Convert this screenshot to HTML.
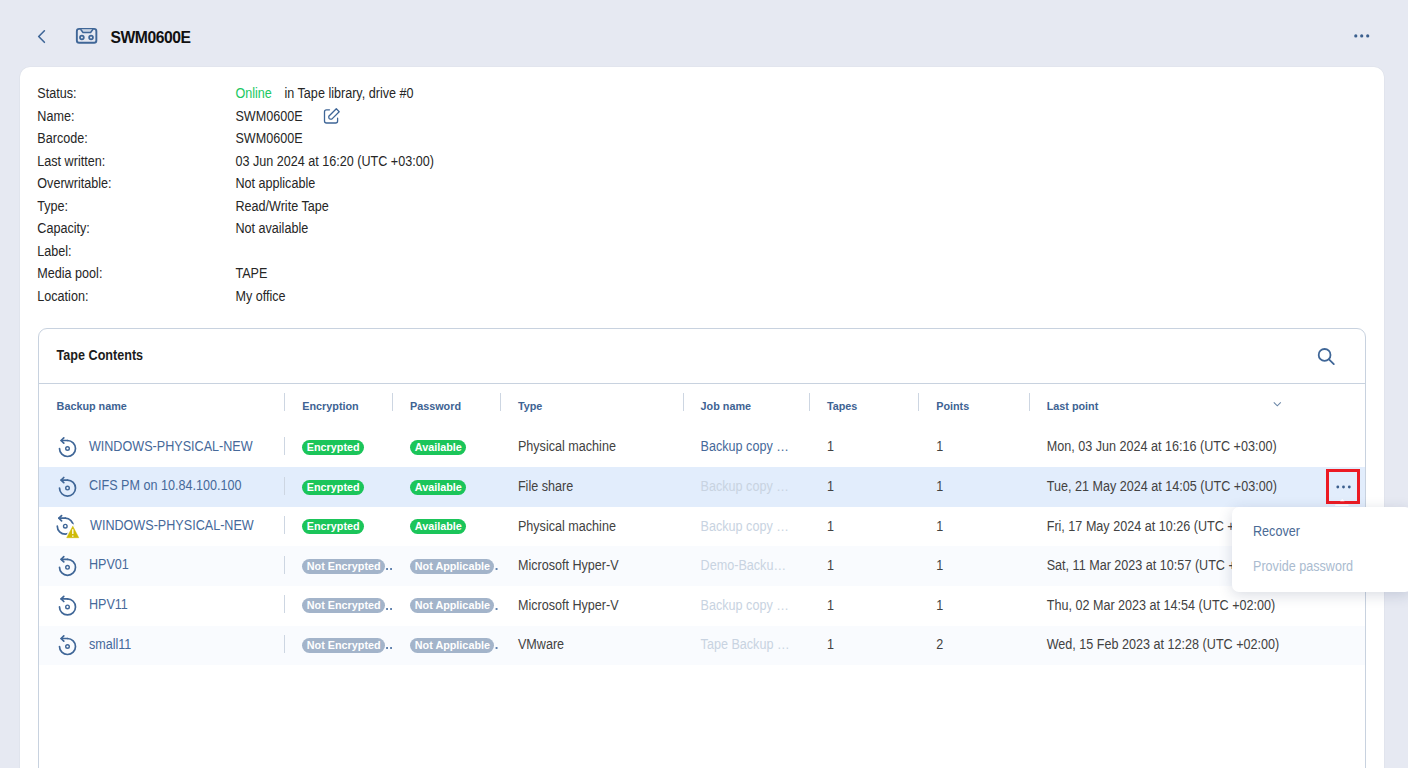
<!DOCTYPE html>
<html><head><meta charset="utf-8">
<style>
*{box-sizing:border-box;margin:0;padding:0}
html,body{width:1408px;height:768px;overflow:hidden;background:#e6e9f2;font-family:"Liberation Sans",sans-serif;color:#262626}
.a{position:absolute;white-space:nowrap;line-height:1}
.f{font-size:12.6px;transform:translateY(0.85px) scaleY(1.1);transform-origin:0 10.67px}
#card{position:absolute;left:20px;top:67px;width:1364px;height:760px;background:#fff;border-radius:10px;box-shadow:0 0 0 0.6px #dde1e9}
#panel{position:absolute;left:38px;top:328px;width:1328px;height:520px;border:1px solid #c8d2df;border-radius:9px;background:#fff}
.lbl{left:37.3px}
.val{left:235.4px}
.th{font-size:10.8px;font-weight:bold;color:#3e6393}
.sep{position:absolute;width:1px;height:18px;background:#cdd6e2}
.row{position:absolute;left:39px;width:1326px;height:39.6px}
.nm{color:#46699a}
.dk{color:#424242}
.badge{position:absolute;height:15px;border-radius:8px;color:#fff;font-weight:bold;font-size:10.8px;line-height:15px;padding-left:4.8px;overflow:hidden;white-space:nowrap}
.g{background:#1bc55a}
.gr{background:#a3b4ca}
.dis{color:#c8d3e1}
</style></head><body>
<svg class="a" style="left:0;top:0" width="300" height="60">
  <polyline points="44.4,30.8 38.7,36.5 44.4,42.3" fill="none" stroke="#3f6697" stroke-width="1.6" stroke-linecap="round" stroke-linejoin="round"/>
  <rect x="76.85" y="28.85" width="19.5" height="13.85" rx="2.3" fill="none" stroke="#3f6697" stroke-width="1.9"/>
  <path d="M80.6 29.3 L83 32.5 H90.6 L93 29.3" fill="#cbd5e4" stroke="#3f6697" stroke-width="1.5" stroke-linejoin="round"/>
  <circle cx="81.9" cy="37.45" r="1.9" fill="none" stroke="#3f6697" stroke-width="1.75"/>
  <circle cx="91.05" cy="37.45" r="1.9" fill="none" stroke="#3f6697" stroke-width="1.75"/>
</svg>
<div class="a" style="left:110.5px;top:29.5px;font-size:15.7px;font-weight:bold;color:#111;letter-spacing:-0.45px">SWM0600E</div>
<svg class="a" style="left:1340px;top:26px" width="40" height="20">
  <circle cx="15.8" cy="9.9" r="1.6" fill="#3b5f8e"/><circle cx="21.7" cy="9.9" r="1.6" fill="#3b5f8e"/><circle cx="27.7" cy="9.9" r="1.6" fill="#3b5f8e"/>
</svg>
<div id="card"></div>
<div class="a f lbl" style="top:87.20px">Status:</div>
<div class="a f lbl" style="top:109.70px">Name:</div>
<div class="a f val" style="top:109.70px">SWM0600E</div>
<div class="a f lbl" style="top:132.20px">Barcode:</div>
<div class="a f val" style="top:132.20px">SWM0600E</div>
<div class="a f lbl" style="top:154.70px">Last written:</div>
<div class="a f val" style="top:154.70px">03 Jun 2024 at 16:20 (UTC +03:00)</div>
<div class="a f lbl" style="top:177.20px">Overwritable:</div>
<div class="a f val" style="top:177.20px">Not applicable</div>
<div class="a f lbl" style="top:199.70px">Type:</div>
<div class="a f val" style="top:199.70px">Read/Write Tape</div>
<div class="a f lbl" style="top:222.20px">Capacity:</div>
<div class="a f val" style="top:222.20px">Not available</div>
<div class="a f lbl" style="top:244.70px">Label:</div>
<div class="a f lbl" style="top:267.20px">Media pool:</div>
<div class="a f val" style="top:267.20px">TAPE</div>
<div class="a f lbl" style="top:289.70px">Location:</div>
<div class="a f val" style="top:289.70px">My office</div>
<div class="a f val" style="top:87.2px;color:#20c862">Online</div>
<div class="a f" style="left:284.5px;top:87.2px">in Tape library, drive #0</div>
<svg class="a" style="left:318px;top:102px" width="30" height="30" viewBox="318 102 30 30">
  <path d="M329.5 109.8 H326.5 A2 2 0 0 0 324.5 111.8 V121 A2 2 0 0 0 326.5 123 H335.6 A2 2 0 0 0 337.6 121 V118.2" fill="none" stroke="#3f6697" stroke-width="1.3" stroke-linecap="round"/>
  <path d="M336.3 108.8 L339.2 111.7 L331.8 119.1 H330.3 A1.5 1.5 0 0 1 328.8 117.6 V116.3 Z" fill="none" stroke="#3f6697" stroke-width="1.3" stroke-linejoin="round"/>
</svg>
<div id="panel"></div>
<div class="a f" style="left:56.6px;top:348.9px;font-weight:bold;color:#1c1c1c">Tape Contents</div>
<svg class="a" style="left:1310px;top:340px" width="30" height="30" viewBox="1310 340 30 30">
  <circle cx="1324.6" cy="354.9" r="5.9" fill="none" stroke="#3f6697" stroke-width="1.8"/>
  <line x1="1329" y1="359.3" x2="1333.8" y2="364.1" stroke="#3f6697" stroke-width="1.8" stroke-linecap="round"/>
</svg>
<div class="a" style="left:39px;top:383px;width:1326px;height:1px;background:#c8d2df"></div>
<div class="row" style="top:467.10px;background:#e2edfc"></div>
<div class="row" style="top:546.30px;background:#f9fbfe"></div>
<div class="row" style="top:625.50px;background:#f9fbfe"></div>
<div class="a th" style="left:56.6px;top:400.9px">Backup name</div>
<div class="a th" style="left:302.3px;top:400.9px">Encryption</div>
<div class="a th" style="left:410px;top:400.9px">Password</div>
<div class="a th" style="left:517.9px;top:400.9px">Type</div>
<div class="a th" style="left:700.6px;top:400.9px">Job name</div>
<div class="a th" style="left:826.9px;top:400.9px">Tapes</div>
<div class="a th" style="left:936.2px;top:400.9px">Points</div>
<div class="a th" style="left:1046.7px;top:400.9px">Last point</div>
<div class="sep" style="left:284px;top:393px"></div>
<div class="sep" style="left:392px;top:393px"></div>
<div class="sep" style="left:500px;top:393px"></div>
<div class="sep" style="left:683px;top:393px"></div>
<div class="sep" style="left:809px;top:393px"></div>
<div class="sep" style="left:918px;top:393px"></div>
<div class="sep" style="left:1029px;top:393px"></div>
<svg class="a" style="left:1268px;top:396px" width="20" height="16" viewBox="1268 396 20 16"><polyline points="1273.8,402.4 1277.3,405.8 1280.8,402.4" fill="none" stroke="#6b87a8" stroke-width="1.1"/></svg>
<div class="a f nm" style="left:88.9px;top:439.78px">WINDOWS-PHYSICAL-NEW</div>
<div class="sep" style="left:284px;top:437.00px"></div>
<div class="badge g" style="left:302px;top:440.00px;width:62px">Encrypted</div>
<div class="badge g" style="left:410px;top:440.00px;width:56px">Available</div>
<div class="a f dk" style="left:517.9px;top:439.78px">Physical machine</div>
<div class="a f nm" style="left:700.6px;top:439.78px">Backup copy …</div>
<div class="a f dk" style="left:826.9px;top:439.78px">1</div>
<div class="a f dk" style="left:936.2px;top:439.78px">1</div>
<div class="a f dk" style="left:1046.7px;top:439.78px">Mon, 03 Jun 2024 at 16:16 (UTC +03:00)</div>
<div class="a f nm" style="left:88.9px;top:478.78px">CIFS PM on 10.84.100.100</div>
<div class="sep" style="left:284px;top:476.60px"></div>
<div class="badge g" style="left:302px;top:479.60px;width:62px">Encrypted</div>
<div class="badge g" style="left:410px;top:479.60px;width:56px">Available</div>
<div class="a f dk" style="left:517.9px;top:479.78px">File share</div>
<div class="a f dis" style="left:700.6px;top:479.78px">Backup copy …</div>
<div class="a f dk" style="left:826.9px;top:479.78px">1</div>
<div class="a f dk" style="left:936.2px;top:479.78px">1</div>
<div class="a f dk" style="left:1046.7px;top:479.78px">Tue, 21 May 2024 at 14:05 (UTC +03:00)</div>
<div class="a f nm" style="left:90px;top:518.78px">WINDOWS-PHYSICAL-NEW</div>
<div class="sep" style="left:284px;top:516.20px"></div>
<div class="badge g" style="left:302px;top:519.20px;width:62px">Encrypted</div>
<div class="badge g" style="left:410px;top:519.20px;width:56px">Available</div>
<div class="a f dk" style="left:517.9px;top:519.78px">Physical machine</div>
<div class="a f dis" style="left:700.6px;top:519.78px">Backup copy …</div>
<div class="a f dk" style="left:826.9px;top:519.78px">1</div>
<div class="a f dk" style="left:936.2px;top:519.78px">1</div>
<div class="a f dk" style="left:1046.7px;top:519.78px">Fri, 17 May 2024 at 10:26 (UTC +03:00)</div>
<div class="a f nm" style="left:88.9px;top:557.78px">HPV01</div>
<div class="sep" style="left:284px;top:555.80px"></div>
<div class="badge gr" style="left:302px;top:558.80px;width:83px">Not Encrypted</div>
<div class="badge gr" style="left:410px;top:558.80px;width:83.5px">Not Applicable</div>
<svg class="a" style="left:380px;top:566.10px" width="120" height="6" viewBox="380 566.10 120 6"><rect x="386.1" y="568.35" width="1.9" height="1.5" fill="#2f5b94"/><rect x="390.1" y="568.35" width="1.9" height="1.5" fill="#2f5b94"/><rect x="495.6" y="568.35" width="1.9" height="1.5" fill="#2f5b94"/></svg>
<div class="a f dk" style="left:517.9px;top:558.78px">Microsoft Hyper-V</div>
<div class="a f dis" style="left:700.6px;top:558.78px">Demo-Backu…</div>
<div class="a f dk" style="left:826.9px;top:558.78px">1</div>
<div class="a f dk" style="left:936.2px;top:558.78px">1</div>
<div class="a f dk" style="left:1046.7px;top:558.78px">Sat, 11 Mar 2023 at 10:57 (UTC +02:00)</div>
<div class="a f nm" style="left:88.9px;top:597.78px">HPV11</div>
<div class="sep" style="left:284px;top:595.40px"></div>
<div class="badge gr" style="left:302px;top:598.40px;width:83px">Not Encrypted</div>
<div class="badge gr" style="left:410px;top:598.40px;width:83.5px">Not Applicable</div>
<svg class="a" style="left:380px;top:605.70px" width="120" height="6" viewBox="380 605.70 120 6"><rect x="386.1" y="607.95" width="1.9" height="1.5" fill="#2f5b94"/><rect x="390.1" y="607.95" width="1.9" height="1.5" fill="#2f5b94"/><rect x="495.6" y="607.95" width="1.9" height="1.5" fill="#2f5b94"/></svg>
<div class="a f dk" style="left:517.9px;top:598.78px">Microsoft Hyper-V</div>
<div class="a f dis" style="left:700.6px;top:598.78px">Backup copy …</div>
<div class="a f dk" style="left:826.9px;top:598.78px">1</div>
<div class="a f dk" style="left:936.2px;top:598.78px">1</div>
<div class="a f dk" style="left:1046.7px;top:598.78px">Thu, 02 Mar 2023 at 14:54 (UTC +02:00)</div>
<div class="a f nm" style="left:88.9px;top:637.78px">small11</div>
<div class="sep" style="left:284px;top:635.00px"></div>
<div class="badge gr" style="left:302px;top:638.00px;width:83px">Not Encrypted</div>
<div class="badge gr" style="left:410px;top:638.00px;width:83.5px">Not Applicable</div>
<svg class="a" style="left:380px;top:645.30px" width="120" height="6" viewBox="380 645.30 120 6"><rect x="386.1" y="647.55" width="1.9" height="1.5" fill="#2f5b94"/><rect x="390.1" y="647.55" width="1.9" height="1.5" fill="#2f5b94"/><rect x="495.6" y="647.55" width="1.9" height="1.5" fill="#2f5b94"/></svg>
<div class="a f dk" style="left:517.9px;top:637.78px">VMware</div>
<div class="a f dis" style="left:700.6px;top:637.78px">Tape Backup …</div>
<div class="a f dk" style="left:826.9px;top:637.78px">1</div>
<div class="a f dk" style="left:936.2px;top:637.78px">2</div>
<div class="a f dk" style="left:1046.7px;top:637.78px">Wed, 15 Feb 2023 at 12:28 (UTC +02:00)</div>
<svg class="a" style="left:0;top:0" width="1408" height="768"><g transform="translate(57 435.60)"><path d="M10.5 4.9 A8 8 0 1 1 2.5 12.9" fill="none" stroke="#3f6697" stroke-width="1.7" stroke-linecap="round"/><path d="M10.5 4.9 H4.2" fill="none" stroke="#3f6697" stroke-width="1.7" stroke-linecap="round"/><path d="M6.8 2.3 L4.1 4.9 L6.8 7.5" fill="none" stroke="#3f6697" stroke-width="1.7" stroke-linecap="round" stroke-linejoin="round"/><circle cx="10.5" cy="12.9" r="1.8" fill="none" stroke="#3f6697" stroke-width="1.4"/></g><g transform="translate(57 475.20)"><path d="M10.5 4.9 A8 8 0 1 1 2.5 12.9" fill="none" stroke="#3f6697" stroke-width="1.7" stroke-linecap="round"/><path d="M10.5 4.9 H4.2" fill="none" stroke="#3f6697" stroke-width="1.7" stroke-linecap="round"/><path d="M6.8 2.3 L4.1 4.9 L6.8 7.5" fill="none" stroke="#3f6697" stroke-width="1.7" stroke-linecap="round" stroke-linejoin="round"/><circle cx="10.5" cy="12.9" r="1.8" fill="none" stroke="#3f6697" stroke-width="1.4"/></g><g transform="translate(54.8 513.30)"><path d="M10.5 4.9 A8 8 0 1 1 2.5 12.9" fill="none" stroke="#3f6697" stroke-width="1.7" stroke-linecap="round"/><path d="M10.5 4.9 H4.2" fill="none" stroke="#3f6697" stroke-width="1.7" stroke-linecap="round"/><path d="M6.8 2.3 L4.1 4.9 L6.8 7.5" fill="none" stroke="#3f6697" stroke-width="1.7" stroke-linecap="round" stroke-linejoin="round"/><circle cx="10.5" cy="12.9" r="1.8" fill="none" stroke="#3f6697" stroke-width="1.4"/><path d="M18 10.6 L25.6 25.6 H10.2 Z" fill="#fff" stroke="#fff" stroke-width="1" stroke-linejoin="round"/><path d="M18 12.9 L24 24.4 H11.9 Z" fill="#cfba06" stroke="#cfba06" stroke-width="0.5" stroke-linejoin="round"/><rect x="17.35" y="15.9" width="1.3" height="4.8" fill="#fff"/><rect x="17.35" y="22.2" width="1.3" height="1.3" fill="#fff"/></g><g transform="translate(57 554.40)"><path d="M10.5 4.9 A8 8 0 1 1 2.5 12.9" fill="none" stroke="#3f6697" stroke-width="1.7" stroke-linecap="round"/><path d="M10.5 4.9 H4.2" fill="none" stroke="#3f6697" stroke-width="1.7" stroke-linecap="round"/><path d="M6.8 2.3 L4.1 4.9 L6.8 7.5" fill="none" stroke="#3f6697" stroke-width="1.7" stroke-linecap="round" stroke-linejoin="round"/><circle cx="10.5" cy="12.9" r="1.8" fill="none" stroke="#3f6697" stroke-width="1.4"/></g><g transform="translate(57 594.00)"><path d="M10.5 4.9 A8 8 0 1 1 2.5 12.9" fill="none" stroke="#3f6697" stroke-width="1.7" stroke-linecap="round"/><path d="M10.5 4.9 H4.2" fill="none" stroke="#3f6697" stroke-width="1.7" stroke-linecap="round"/><path d="M6.8 2.3 L4.1 4.9 L6.8 7.5" fill="none" stroke="#3f6697" stroke-width="1.7" stroke-linecap="round" stroke-linejoin="round"/><circle cx="10.5" cy="12.9" r="1.8" fill="none" stroke="#3f6697" stroke-width="1.4"/></g><g transform="translate(57 633.60)"><path d="M10.5 4.9 A8 8 0 1 1 2.5 12.9" fill="none" stroke="#3f6697" stroke-width="1.7" stroke-linecap="round"/><path d="M10.5 4.9 H4.2" fill="none" stroke="#3f6697" stroke-width="1.7" stroke-linecap="round"/><path d="M6.8 2.3 L4.1 4.9 L6.8 7.5" fill="none" stroke="#3f6697" stroke-width="1.7" stroke-linecap="round" stroke-linejoin="round"/><circle cx="10.5" cy="12.9" r="1.8" fill="none" stroke="#3f6697" stroke-width="1.4"/></g></svg>
<div class="a" style="left:1326.2px;top:469.2px;width:33.6px;height:34.4px;border:3px solid #ec1a23"></div>
<svg class="a" style="left:1334px;top:498px" width="16" height="10" viewBox="1334 498 16 10"><path d="M1340 501.3 L1342.3 498.9 L1344.6 501.3 Z" fill="#fff"/><rect x="1335" y="504.5" width="13.7" height="1.5" rx="0.7" fill="#fff"/></svg>
<svg class="a" style="left:1330px;top:480px" width="26" height="14" viewBox="1330 480 26 14"><circle cx="1337.8" cy="487" r="1.4" fill="#3b5f8e"/><circle cx="1343.5" cy="487" r="1.4" fill="#3b5f8e"/><circle cx="1349.3" cy="487" r="1.4" fill="#3b5f8e"/></svg>
<div class="a" style="left:1232.2px;top:507.2px;width:180px;height:84.4px;background:#fff;border-radius:7px;box-shadow:0 3px 14px rgba(30,50,90,0.17)"></div>
<div class="a f" style="left:1253px;top:525.3px;color:#4a6a95">Recover</div>
<div class="a f" style="left:1253px;top:560.1px;color:#aabbcf">Provide password</div>
</body></html>
